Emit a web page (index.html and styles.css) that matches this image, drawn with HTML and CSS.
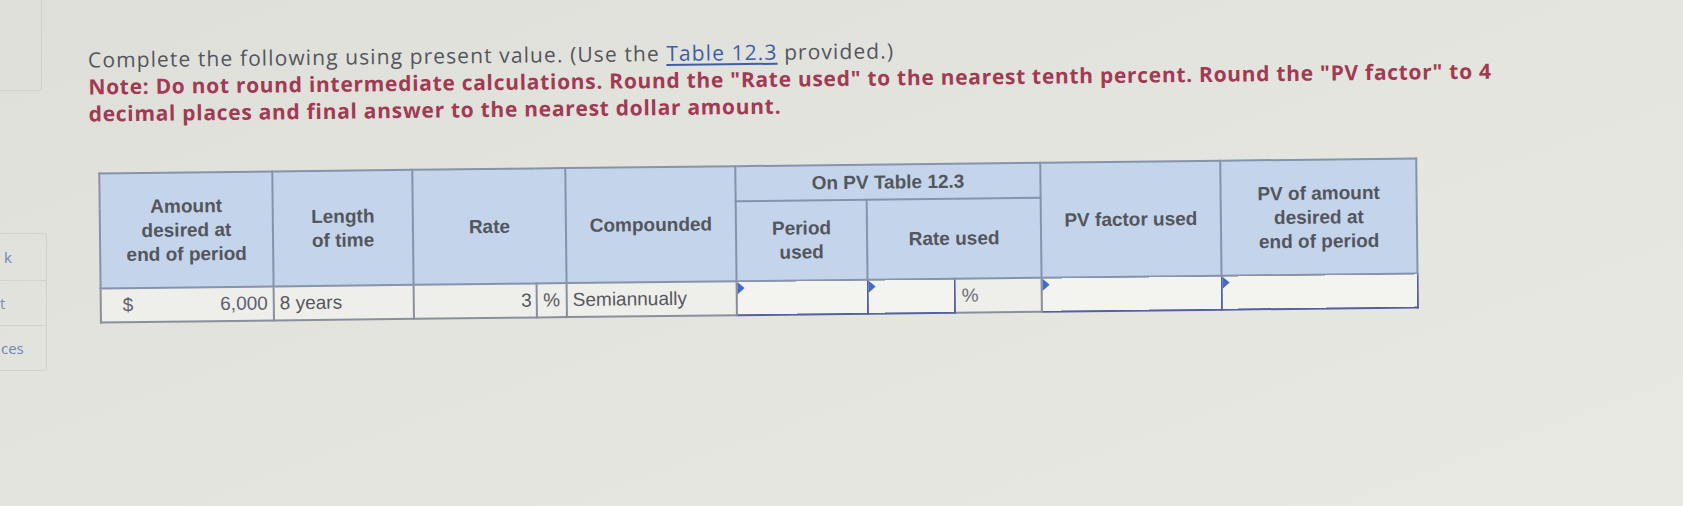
FILE: index.html
```html
<!DOCTYPE html>
<html lang="en">
<head>
<meta charset="utf-8">
<title>Present value</title>
<link rel="stylesheet" href="styles.css">
</head>
<body>
<div class="page">
  <aside class="side">
    <div class="side-top"></div>
    <div class="side-nav">
      <div class="side-item">k</div>
      <div class="side-item">t</div>
      <div class="side-item">ces</div>
    </div>
  </aside>
  <main class="main">
    <div class="question">
      <p class="intro">Complete the following using present value. (Use the <span class="link">Table 12.3</span> provided.)</p>
      <p class="note">Note: Do not round intermediate calculations. Round the "Rate used" to the nearest tenth percent. Round the "PV factor" to 4 decimal places and final answer to the nearest dollar amount.</p>
    </div>
    <table class="pv">
      <colgroup>
        <col class="c-amt"><col class="c-len"><col class="c-rate"><col class="c-pct"><col class="c-comp">
        <col class="c-per"><col class="c-ru"><col class="c-rup"><col class="c-fac"><col class="c-pv">
      </colgroup>
      <thead>
        <tr class="h1">
          <th rowspan="2">Amount<br>desired at<br>end of period</th>
          <th rowspan="2">Length<br>of time</th>
          <th rowspan="2" colspan="2">Rate</th>
          <th rowspan="2">Compounded</th>
          <th colspan="3" class="group">On PV Table 12.3</th>
          <th rowspan="2">PV factor used</th>
          <th rowspan="2">PV of amount<br>desired at<br>end of period</th>
        </tr>
        <tr class="h2">
          <th>Period<br>used</th>
          <th colspan="2">Rate used</th>
        </tr>
      </thead>
      <tbody>
        <tr class="data">
          <td><div class="money"><span class="cur">$</span><span>6,000</span></div></td>
          <td class="left">8 years</td>
          <td class="right">3</td>
          <td class="center">%</td>
          <td class="left">Semiannually</td>
          <td class="input"><span class="flag"></span></td>
          <td class="input"><span class="flag"></span></td>
          <td class="pct">%</td>
          <td class="input"><span class="flag"></span></td>
          <td class="input"><span class="flag"></span></td>
        </tr>
      </tbody>
    </table>
  </main>
</div>
</body>
</html>
```

FILE: styles.css
```css
html, body {
  margin: 0;
  padding: 0;
}
body {
  width: 1683px;
  height: 506px;
  overflow: hidden;
  background: linear-gradient(160deg, #dedfd9 0%, #e4e4df 45%, #e9e9e4 100%);
  font-family: "Liberation Sans", Arial, sans-serif;
}
.page {
  display: flex;
  align-items: flex-start;
}
.side {
  width: 47px;
  flex: none;
  display: flex;
  flex-direction: column;
}
.side-top {
  width: 41px;
  height: 90px;
  border-right: 1px solid #d2d2cd;
  border-bottom: 1px solid #d2d2cd;
  border-bottom-right-radius: 3px;
}
.side-nav {
  margin-top: 142px;
  width: 46px;
  border: 1px solid #d3d3ce;
  border-left: none;
  border-radius: 0 3px 3px 0;
}
.side-item {
  height: 44px;
  display: flex;
  align-items: center;
  padding-left: 2px;
  font-family: "Open Sans", sans-serif;
  font-size: 15px;
  color: #6d86b8;
  border-bottom: 1px solid #d3d3ce;
  overflow: hidden;
}
.side-item:first-child { height: 46px; padding-left: 4px; }
.side-item:nth-child(2) { color: #7d8fb3; padding-left: 0; }
.side-item:last-child { border-bottom: none; padding-left: 1px; }
.main {
  padding: 47px 0 0 41px;
  transform: rotate(-0.65deg);
  transform-origin: 0 60px;
}
.question {
  width: 1440px;
}
.question p {
  margin: 0;
  font-family: "Open Sans", Lato, sans-serif;
  font-size: 21px;
  line-height: 27px;
}
.intro {
  color: #55555d;
  letter-spacing: 1.1px;
}
.link {
  color: #3c5fa8;
  text-decoration: underline;
  text-underline-offset: 3px;
}
.note {
  color: #a13a52;
  font-weight: 700;
  letter-spacing: 0.7px;
}
.pv {
  margin: 45px 0 0 9px;
  border-collapse: collapse;
  table-layout: fixed;
  width: 1317px;
  font-size: 19px;
  color: #56585e;
}
.c-amt { width: 173px; }
.c-len { width: 140px; }
.c-rate { width: 123px; }
.c-pct { width: 30px; }
.c-comp { width: 170px; }
.c-per { width: 131px; }
.c-ru { width: 87px; }
.c-rup { width: 87px; }
.c-fac { width: 180px; }
.c-pv { width: 196px; }
.pv th {
  background: #c4d4eb;
  border: 2px solid #8593ab;
  font-weight: 700;
  line-height: 24px;
  padding: 0 4px;
  text-align: center;
  vertical-align: middle;
  color: #53565c;
}
.h1 { height: 33px; }
.h2 { height: 80px; }
.pv th.group { height: 33px; }
.pv td {
  background: #eeeeea;
  border: 2px solid #8a8f9c;
  height: 32px;
  padding: 0 5px;
  vertical-align: middle;
  white-space: nowrap;
}
.pv td.left { text-align: left; }
.pv td.right { text-align: right; padding-right: 4px; }
.pv td.center { text-align: center; padding: 0; }
.pv td.pct { text-align: left; padding-left: 6px; color: #6a6d74; }
.money {
  display: flex;
  justify-content: space-between;
  padding-left: 16px;
  color: #5e6170;
}
.pv td.input {
  position: relative;
  background: #f3f3f0;
  border: 2.5px solid #55619f;
  padding: 0;
}
.flag {
  position: absolute;
  left: 0;
  top: 0;
  width: 0;
  height: 0;
  border-left: 7px solid #4668c8;
  border-top: 6px solid transparent;
  border-bottom: 6px solid transparent;
}
```
